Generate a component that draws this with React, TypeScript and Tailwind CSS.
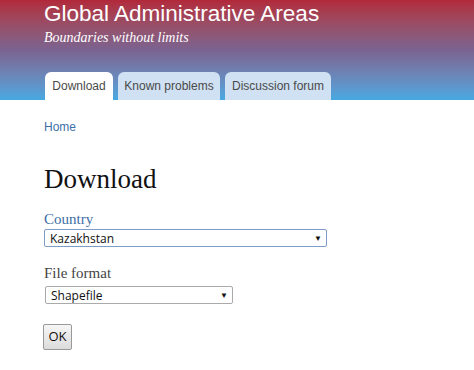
export default function App() {
  const tabs = [
    { label: "Download", active: true, w: "w-[68px]" },
    { label: "Known problems", active: false, w: "w-[102px]" },
    { label: "Discussion forum", active: false, w: "w-[106px]" },
  ];
  return (
    <div className="w-[474px] h-[370px] overflow-hidden bg-white">
      <div className="h-[100px] bg-gradient-to-b from-[#b1283a] via-[#7a6390] to-[#45a8e2] flex flex-col pl-[44px]">
        <div className="pt-[1px] text-[22.5px] leading-[26px] text-white font-['Liberation_Sans',Arial,sans-serif]">
          Global Administrative Areas
        </div>
        <div className="mt-[3px] text-[14px] leading-[16px] italic text-white font-['Liberation_Serif',serif]">
          Boundaries without limits
        </div>
        <div className="mt-auto flex gap-[5px] pl-[1px]">
          {tabs.map((t) => (
            <div
              key={t.label}
              className={`${t.w} h-[28px] rounded-t-[6px] flex items-center justify-center text-[12px] text-[#4a4a4a] font-['Liberation_Sans',Arial,sans-serif] ${
                t.active ? "bg-white" : "bg-[#cfe1f2]"
              }`}
            >
              {t.label}
            </div>
          ))}
        </div>
      </div>
      <div className="pl-[44px] flex flex-col items-start">
        <div className="mt-[20px] text-[12px] leading-[14px] text-[#3d6fa8] font-['Liberation_Sans',Arial,sans-serif]">
          Home
        </div>
        <h1 className="mt-[30px] text-[27px] leading-[30px] text-[#111] font-['Liberation_Serif',serif]">
          Download
        </h1>
        <div className="mt-[17px] text-[15px] leading-[17px] text-[#3b6ea6] font-['Liberation_Serif',serif]">
          Country
        </div>
        <div className="mt-[1px] w-[283px] h-[18px] border border-[#7e9cc8] rounded-[2px] flex items-center justify-between pl-[5px] pr-[4px] text-[12px] text-[#111] font-['Open_Sans',sans-serif]">
          <span className="leading-[15px]">Kazakhstan</span>
          <span className="text-[8px] leading-[8px]">▼</span>
        </div>
        <div className="mt-[18px] text-[15px] leading-[17px] text-[#444] font-['Liberation_Serif',serif]">
          File format
        </div>
        <div className="mt-[4px] ml-[1px] w-[188px] h-[18px] border border-[#aaa] rounded-[2px] flex items-center justify-between pl-[5px] pr-[4px] text-[12px] text-[#111] font-['Open_Sans',sans-serif]">
          <span className="leading-[15px]">Shapefile</span>
          <span className="text-[8px] leading-[8px]">▼</span>
        </div>
        <button className="mt-[20px] -ml-[1px] w-[29px] h-[26px] border border-[#999] rounded-[2px] bg-gradient-to-b from-[#f6f6f6] to-[#dcdcdc] text-[13px] text-[#111] font-['Open_Sans',sans-serif] flex items-center justify-center">
          OK
        </button>
      </div>
    </div>
  );
}
